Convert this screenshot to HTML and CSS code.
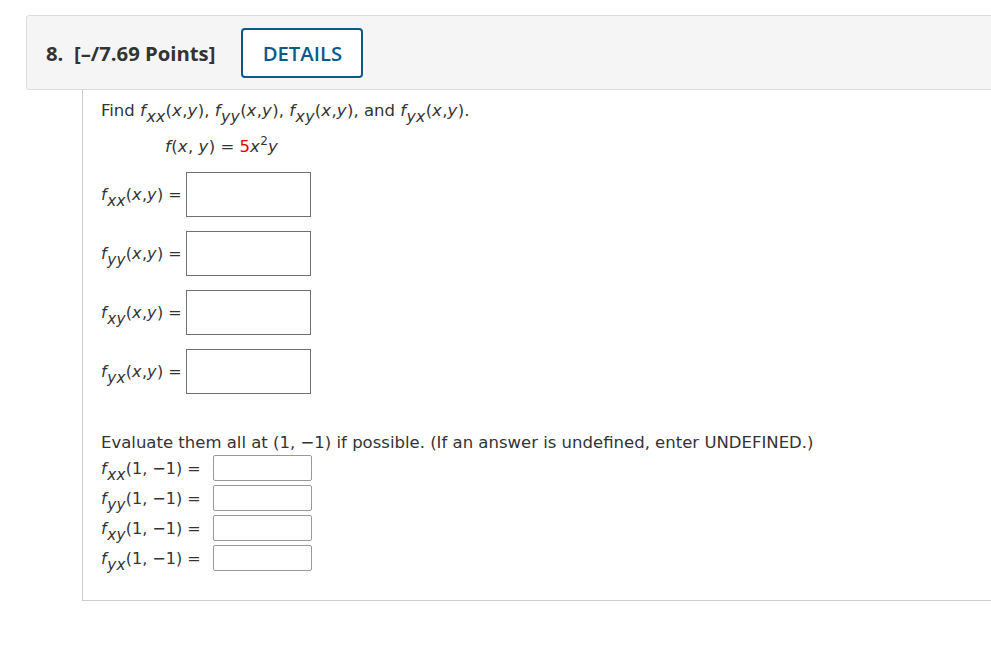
FILE: index.html
```html
<!DOCTYPE html>
<html>
<head>
<meta charset="utf-8">
<link rel="stylesheet" href="styles.css">
</head>
<body>
<div class="question">
  <div class="qhead">
    <span class="qnum">8.&nbsp; [–/7.69 Points]</span>
    <button class="details">DETAILS</button>
  </div>
  <div class="qbody">
    <p class="prompt">Find <span class="m"><i>f</i><sub>xx</sub>(<i>x</i>,<i>y</i>)</span>, <span class="m"><i>f</i><sub>yy</sub>(<i>x</i>,<i>y</i>)</span>, <span class="m"><i>f</i><sub>xy</sub>(<i>x</i>,<i>y</i>)</span>, and <span class="m"><i>f</i><sub>yx</sub>(<i>x</i>,<i>y</i>)</span>.</p>
    <p class="formula"><i>f</i>(<i>x</i>, <i>y</i>) = <span class="red">5</span><i>x</i><sup>2</sup><i>y</i></p>
    <div class="rows">
      <div class="row"><span class="lbl"><i>f</i><sub>xx</sub>(<i>x</i>,<i>y</i>) =</span><input class="big" type="text"></div>
      <div class="row"><span class="lbl"><i>f</i><sub>yy</sub>(<i>x</i>,<i>y</i>) =</span><input class="big" type="text"></div>
      <div class="row"><span class="lbl"><i>f</i><sub>xy</sub>(<i>x</i>,<i>y</i>) =</span><input class="big" type="text"></div>
      <div class="row"><span class="lbl"><i>f</i><sub>yx</sub>(<i>x</i>,<i>y</i>) =</span><input class="big" type="text"></div>
    </div>
    <p class="evaluate">Evaluate them all at (1, −1) if possible. (If an answer is undefined, enter UNDEFINED.)</p>
    <div class="srows">
      <div class="srow"><span class="slbl"><i>f</i><sub>xx</sub>(1, −1) =</span><input class="small" type="text"></div>
      <div class="srow"><span class="slbl"><i>f</i><sub>yy</sub>(1, −1) =</span><input class="small" type="text"></div>
      <div class="srow"><span class="slbl"><i>f</i><sub>xy</sub>(1, −1) =</span><input class="small" type="text"></div>
      <div class="srow"><span class="slbl"><i>f</i><sub>yx</sub>(1, −1) =</span><input class="small" type="text"></div>
    </div>
  </div>
</div>
</body>
</html>
```

FILE: styles.css
```css
html, body {
  margin: 0;
  padding: 0;
  background: #ffffff;
  overflow: hidden;
}
body {
  font-family: "DejaVu Sans", Verdana, sans-serif;
  color: #333333;
}
.question {
  margin: 15px -20px 0 26px;
}
.qhead {
  display: flex;
  align-items: center;
  height: 73px;
  border: 1px solid #dcdcdc;
  border-radius: 3px;
  background: #f5f5f5;
  padding-left: 19px;
  gap: 26px;
}
.qnum {
  font-family: "Open Sans", sans-serif;
  font-weight: 700;
  font-size: 20.3px;
  color: #333333;
}
.details {
  font-family: "Open Sans", sans-serif;
  font-weight: 600;
  font-size: 20.3px;
  color: #0b5a8c;
  background: #ffffff;
  border: 2px solid #0b5a8c;
  border-radius: 4px;
  width: 122px;
  height: 50px;
  padding: 0;
}
.qbody {
  margin-left: 56px;
  border-left: 1px solid #cccccc;
  border-bottom: 1px solid #cccccc;
  padding: 11px 0 29px 18px;
  font-size: 16.5px;
}
p { margin: 0; }
.prompt {
  line-height: 20px;
}
.m i, .lbl i, .slbl i, .formula i {
  letter-spacing: 0.5px;
}
sub {
  font-size: 0.95em;
  font-style: italic;
  letter-spacing: 0.3px;
  vertical-align: -6px;
  line-height: 0;
}
sup {
  font-size: 12px;
  vertical-align: 7px;
  line-height: 0;
}
.formula {
  margin: 16px 0 0 64px;
  line-height: 20px;
}
.red { color: #e8000b; }
.rows {
  display: flex;
  flex-direction: column;
  gap: 14px;
  margin-top: 15px;
}
.row {
  display: flex;
  align-items: center;
  gap: 3px;
}
.lbl {
  font-size: 16px;
  width: 82px;
  white-space: nowrap;
}
input {
  margin: 0;
  padding: 0;
  box-sizing: border-box;
  background: #ffffff;
}
.big {
  width: 125px;
  height: 45px;
  border: 1px solid #707070;
}
.evaluate {
  margin-top: 39px;
  line-height: 20px;
}
.srows {
  display: flex;
  flex-direction: column;
  gap: 4px;
  margin-top: 2px;
}
.srow {
  display: flex;
  align-items: center;
  gap: 8px;
}
.slbl {
  font-size: 16px;
  width: 104px;
  white-space: nowrap;
}
.small {
  width: 99px;
  height: 26px;
  border: 1px solid #999999;
  border-radius: 2px;
}
```
